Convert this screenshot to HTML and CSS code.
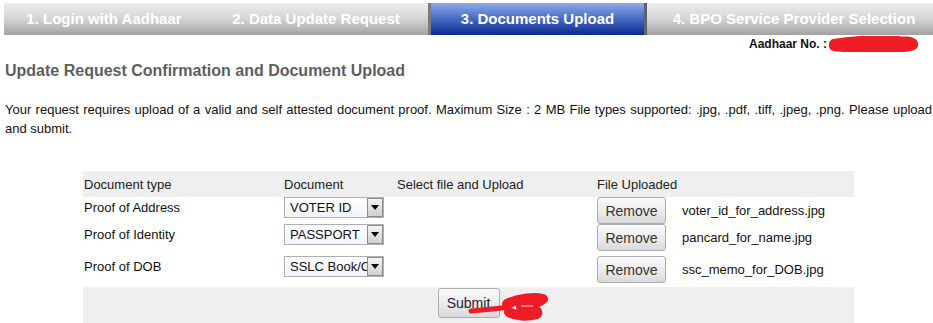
FILE: index.html
```html
<!DOCTYPE html>
<html lang="en">
<head>
  <meta charset="UTF-8" />
  <title>Documents Upload</title>
  <link rel="stylesheet" href="styles.css">
</head>
<body>

  <!-- langkah langkah -->
  <div class="steps">
    <div class="step step-1">1. Login with Aadhaar</div>
    <div class="step step-2">2. Data Update Request</div>
    <div class="step step-3 active">3. Documents Upload</div>
    <div class="step step-4">4. BPO Service Provider Selection</div>
  </div>

  <div class="aadhaar">
    Aadhaar No. :
    <span class="mask">
      <svg width="92" height="16" viewBox="0 0 92 16">
        <path d="M6 8 C22 5, 50 4, 72 5 C82 5, 86 7, 85 9 C83 11, 70 12, 50 11 C30 11, 14 12, 6 10" fill="none" stroke="#ee1c24" stroke-width="10" stroke-linecap="round" stroke-linejoin="round"/>
      </svg>
    </span>
  </div>

  <h2 class="title">Update Request Confirmation and Document Upload</h2>

  <p class="info">
    Your request requires upload of a valid and self attested document proof. Maximum Size : 2 MB File types supported: .jpg, .pdf, .tiff, .jpeg, .png. Please upload and submit.
  </p>

  <div class="doc-table">
    <div class="row head">
      <div class="cell">Document type</div>
      <div class="cell">Document</div>
      <div class="cell">Select file and Upload</div>
      <div class="cell">File Uploaded</div>
    </div>

    <div class="row">
      <div class="cell label">Proof of Address</div>
      <div class="cell"><div class="select"><span class="val">VOTER ID</span><span class="arrow"><svg width="8" height="5" viewBox="0 0 8 5"><path d="M0 0 H8 L4 5 Z" fill="#000"/></svg></span></div></div>
      <div class="cell"></div>
      <div class="cell uploaded"><button class="btn">Remove</button><span class="fname">voter_id_for_address.jpg</span></div>
    </div>

    <div class="row">
      <div class="cell label">Proof of Identity</div>
      <div class="cell"><div class="select"><span class="val">PASSPORT</span><span class="arrow"><svg width="8" height="5" viewBox="0 0 8 5"><path d="M0 0 H8 L4 5 Z" fill="#000"/></svg></span></div></div>
      <div class="cell"></div>
      <div class="cell uploaded"><button class="btn">Remove</button><span class="fname">pancard_for_name.jpg</span></div>
    </div>

    <div class="row last">
      <div class="cell label">Proof of DOB</div>
      <div class="cell"><div class="select"><span class="val">SSLC Book/Certificate</span><span class="arrow"><svg width="8" height="5" viewBox="0 0 8 5"><path d="M0 0 H8 L4 5 Z" fill="#000"/></svg></span></div></div>
      <div class="cell"></div>
      <div class="cell uploaded"><button class="btn">Remove</button><span class="fname">ssc_memo_for_DOB.jpg</span></div>
    </div>

    <div class="foot">
      <button class="btn submit">Submit</button>
      <!-- coretan merah -->
      <svg class="scribble" width="84" height="30" viewBox="0 0 84 30">
        <path d="M4 20 C16 19, 28 18, 42 16" fill="none" stroke="#ee1c24" stroke-width="5" stroke-linecap="round"/>
        <path d="M40 13 C52 7, 68 6, 76 8 C72 12, 62 14, 54 16 C64 17, 72 18, 70 23 C60 26, 48 25, 42 21" fill="none" stroke="#ee1c24" stroke-width="10" stroke-linecap="round" stroke-linejoin="round"/>
        <path d="M54 15 H66" stroke="#f47c80" stroke-width="2"/>
      </svg>
    </div>
  </div>

</body>
</html>
```

FILE: styles.css
```css
* { box-sizing: border-box; }

body {
  margin: 0;
  padding: 0;
  font-family: 'Liberation Sans', Arial, sans-serif;
  font-size: 13px;
  color: #111;
  background: white;
  width: 933px;
  overflow: hidden;
}

.steps {
  display: flex;
  height: 32px;
  margin: 3px 0 0 4px;
}

.step {
  background: linear-gradient(to bottom, #ededed 0%, #d4d4d4 50%, #a2a2a2 100%);
  color: white;
  font-weight: bold;
  font-size: 15px;
  line-height: 32px;
  text-align: center;
  white-space: nowrap;
}

.step-1 { width: 200px; }
.step-2 { width: 227px; border-right: 3px solid #7b7b7b; }
.step-3 { width: 216px; border-right: 3px solid #5d6270; }
.step-4 { flex: 1; padding-left: 8px; }

.step.active {
  background: linear-gradient(to bottom, #8eabe9 0%, #4c70c8 45%, #0c2b8e 100%);
}

.aadhaar {
  height: 18px;
  line-height: 18px;
  font-size: 12px;
  font-weight: bold;
  padding-right: 13px;
  display: flex;
  justify-content: flex-end;
  align-items: center;
  gap: 1px;
}

.mask {
  display: inline-block;
  width: 92px;
  height: 16px;
}

.mask svg { display: block; }

.title {
  margin: 7px 0 0 5px;
  font-size: 16px;
  line-height: 22px;
  color: #5e5e5e;
}

.info {
  margin: 18px 1px 0 5px;
  line-height: 19px;
  text-align: justify;
  color: #111;
}

.doc-table {
  margin: 33px 0 0 83px;
  width: 771px;
}

.row {
  display: grid;
  grid-template-columns: 200px 113px 200px 258px;
  height: 27px;
  align-items: start;
}

.row.head {
  height: 26px;
  background: #efefef;
  align-items: center;
  color: #222;
}

.row.last {
  height: 36px;
  padding-top: 5px;
}

.cell {
  padding-left: 1px;
}

.label {
  line-height: 21px;
  color: #111;
}

.select {
  display: flex;
  width: 100px;
  height: 21px;
  border: 1px solid #a9b0ba;
  background: linear-gradient(to bottom, #ffffff, #f1f5fa);
  font-size: 13px;
  line-height: 19px;
  color: #111;
  overflow: hidden;
}

.select .val {
  flex: 1;
  padding-left: 5px;
  white-space: nowrap;
  overflow: hidden;
}

.select .arrow {
  width: 16px;
  height: 19px;
  border: 1px solid #8c8c8c;
  background: linear-gradient(to bottom, #f4f4f4, #cfcfcf);
  display: flex;
  justify-content: center;
  align-items: center;
}

.select .arrow svg { display: block; }

.uploaded {
  display: flex;
  align-items: center;
  height: 27px;
}

.btn {
  font-family: 'Liberation Sans', Arial, sans-serif;
  font-size: 14px;
  color: #333;
  background: linear-gradient(to bottom, #fafafa 0%, #ececec 50%, #dadada 100%);
  border: 1px solid #adadad;
  border-radius: 3px;
  padding: 0;
  cursor: pointer;
}

.uploaded .btn {
  width: 69px;
  height: 27px;
}

.fname {
  margin-left: 16px;
  color: #111;
}

.foot {
  position: relative;
  height: 40px;
  background: #efefef;
  display: flex;
  justify-content: center;
  padding-top: 1px;
}

.submit {
  width: 62px;
  height: 30px;
  color: #1e2233;
}

.scribble {
  position: absolute;
  left: 384px;
  top: 4px;
}
```
